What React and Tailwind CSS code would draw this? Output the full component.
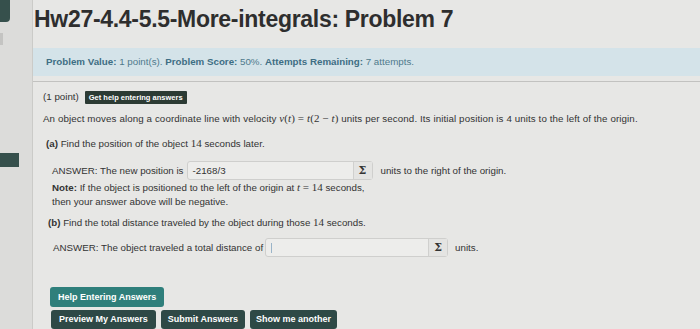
import React from 'react';

function Sigma() {
  return (
    <div className="flex h-full w-[19px] items-center justify-center border-l border-[#d0d0ce] bg-[#e4e4e2] text-[11px] font-bold text-[#333]" style={{ fontFamily: '"DejaVu Serif", serif' }}>
      Σ
    </div>
  );
}

function AnswerBox({ value, width, caret }) {
  return (
    <div className={`flex h-[19px] ${width} items-stretch rounded-[3px] border border-[#cfcfcd] bg-[#ededeb]`}>
      <div className="flex flex-1 items-center px-[5px] text-[9.75px] text-[#333]">
        {caret ? <span className="h-[10px] w-px bg-[#9ab4c8]" /> : value}
      </div>
      <Sigma />
    </div>
  );
}

const M = ({ children }) => (
  <span className="text-[11px] italic" style={{ fontFamily: '"Liberation Serif", serif' }}>{children}</span>
);
const N = ({ children }) => (
  <span className="text-[11px]" style={{ fontFamily: '"Liberation Serif", serif' }}>{children}</span>
);

export default function App() {
  return (
    <div className="flex h-[329px] w-[700px] overflow-hidden bg-[#e7e7e5] text-[#333]" style={{ fontFamily: '"Liberation Sans", Arial, sans-serif' }}>
      <aside className="relative w-[33px] shrink-0 border-r border-[#cbcbc8] bg-[#dcdcda]">
        <div className="h-[22px] w-[10px] rounded-br-[4px] bg-[#36504c]" />
        <div className="mt-[11px] h-[12px] w-[3px] bg-[#c4c4c2]" />
        <div className="mt-[108px] h-[14px] w-[19px] bg-[#36504c]" />
      </aside>

      <main className="flex-1">
        <h1 className="pl-px pt-[6px] text-[23px] font-semibold leading-[27px] tracking-[-0.3px] text-[#2e2e2e]">
          Hw27-4.4-5.5-More-integrals: Problem 7
        </h1>

        <div className="mt-[15px] flex h-[28px] items-center bg-[#d4e3e9] pl-[13px] text-[9.75px] text-[#4f7a8c]">
          <b className="text-[#3e6e84]">Problem Value:</b>&nbsp;1 point(s).&nbsp;
          <b className="text-[#3e6e84]">Problem Score:</b>&nbsp;50%.&nbsp;
          <b className="text-[#3e6e84]">Attempts Remaining:</b>&nbsp;7 attempts.
        </div>

        <div className="mt-[5px] border-t border-[#c2c2c0]" />

        <div className="pl-[10px] text-[9.75px] leading-[14px]">
          <div className="mt-[8px] flex h-[14px] items-center gap-[6px]">
            <span>(1 point)</span>
            <span className="rounded-[1px] bg-[#2c3b34] px-[4px] py-[2px] text-[7.5px] font-bold leading-[9px] text-white">Get help entering answers</span>
          </div>

          <p className="mt-[7px] tracking-[0.1px]">
            An object moves along a coordinate line with velocity <M>v</M><N>(</N><M>t</M><N>) = </N><M>t</M><N>(2 − </N><M>t</M><N>)</N> units per second. Its initial position is 4 units to the left of the origin.
          </p>

          <p className="ml-[3px] mt-[10px]"><b>(a)</b> Find the position of the object <N>14</N> seconds later.</p>

          <div className="ml-[9px] mt-[10px] flex items-center">
            <span>ANSWER: The new position is</span>
            <div className="ml-[3px]"><AnswerBox value="-2168/3" width="w-[186px]" /></div>
            <span className="ml-[8px]">units to the right of the origin.</span>
          </div>
          <p className="ml-[9px]">
            <b>Note:</b> If the object is positioned to the left of the origin at <M>t</M><N> = 14</N> seconds,<br />
            then your answer above will be negative.
          </p>

          <p className="ml-[5px] mt-[6px]"><b>(b)</b> Find the total distance traveled by the object during those <N>14</N> seconds.</p>

          <div className="ml-[10px] mt-[8px] flex items-center">
            <span>ANSWER: The object traveled a total distance of</span>
            <div className="ml-[2px]"><AnswerBox caret width="w-[183px]" /></div>
            <span className="ml-[7px]">units.</span>
          </div>

          <div className="ml-[7px] mt-[30px] flex flex-col items-start gap-[3px] text-[9px] font-semibold leading-[11px] text-white">
            <button className="flex h-[20px] items-center rounded-[3px] bg-[#2f7f7b] px-[8px]">Help Entering Answers</button>
            <div className="ml-px flex gap-[5px]">
              <button className="flex h-[19px] items-center rounded-[3px] bg-[#2e4946] px-[8px]">Preview My Answers</button>
              <button className="flex h-[19px] items-center rounded-[3px] bg-[#2e4946] px-[7px]">Submit Answers</button>
              <button className="flex h-[19px] items-center rounded-[3px] bg-[#2e4946] px-[6px]">Show me another</button>
            </div>
          </div>
        </div>
      </main>
    </div>
  );
}
